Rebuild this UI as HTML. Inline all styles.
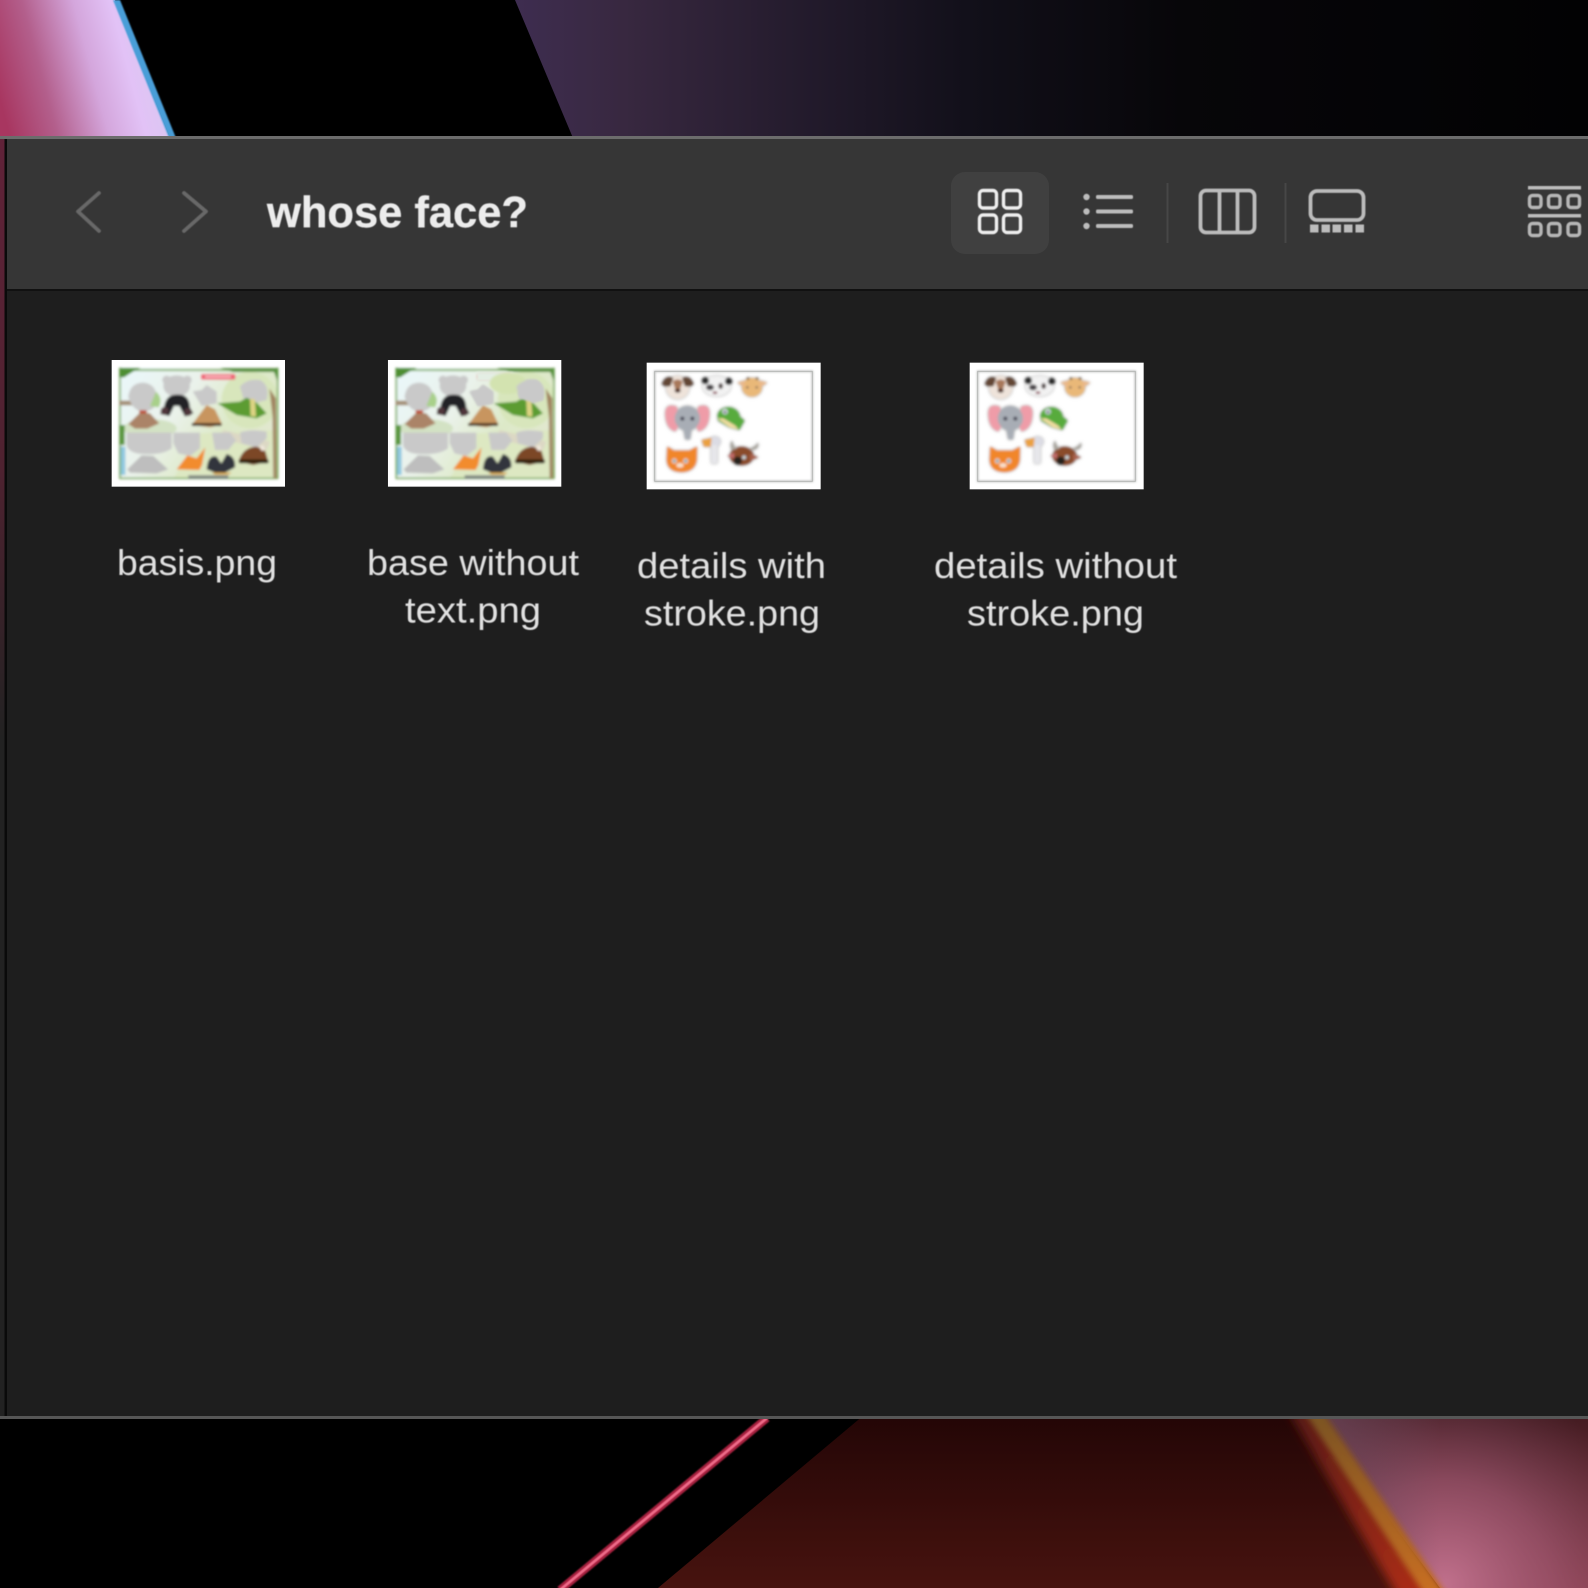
<!DOCTYPE html>
<html lang="en">
<head>
<meta charset="utf-8">
<title>whose face?</title>
<style>
html,body{margin:0;padding:0;width:1588px;height:1588px;overflow:hidden;background:#000}
svg{display:block}
text{font-family:"Liberation Sans",sans-serif}
</style>
</head>
<body>
<svg xmlns="http://www.w3.org/2000/svg" width="1588" height="1588" viewBox="0 0 1588 1588">
<defs>
  <linearGradient id="pink" gradientUnits="userSpaceOnUse" x1="0" y1="100" x2="150" y2="60">
    <stop offset="0" stop-color="#a83660"/>
    <stop offset="0.3" stop-color="#b35f8c"/>
    <stop offset="0.62" stop-color="#d4a6dc"/>
    <stop offset="0.85" stop-color="#e2c2f6"/>
    <stop offset="1" stop-color="#dcc6f2"/>
  </linearGradient>
  <linearGradient id="purple" gradientUnits="userSpaceOnUse" x1="515" y1="0" x2="1588" y2="0">
    <stop offset="0" stop-color="#3e2d50"/>
    <stop offset="0.1" stop-color="#382840"/>
    <stop offset="0.28" stop-color="#221a2b"/>
    <stop offset="0.42" stop-color="#12101a"/>
    <stop offset="0.62" stop-color="#070609"/>
    <stop offset="1" stop-color="#020203"/>
  </linearGradient>
  <linearGradient id="red" gradientUnits="userSpaceOnUse" x1="0" y1="1419" x2="0" y2="1588">
    <stop offset="0" stop-color="#240606"/>
    <stop offset="1" stop-color="#47130f"/>
  </linearGradient>
  <linearGradient id="orange" gradientUnits="userSpaceOnUse" x1="0" y1="1419" x2="0" y2="1588">
    <stop offset="0" stop-color="#7d5420"/>
    <stop offset="1" stop-color="#c66e22"/>
  </linearGradient>
  <linearGradient id="redband" gradientUnits="userSpaceOnUse" x1="0" y1="1419" x2="0" y2="1588">
    <stop offset="0" stop-color="#5e1c12"/>
    <stop offset="1" stop-color="#a82c12"/>
  </linearGradient>
  <linearGradient id="roseBase" gradientUnits="userSpaceOnUse" x1="1588" y1="1419" x2="1588" y2="1588">
    <stop offset="0" stop-color="#451c22"/>
    <stop offset="1" stop-color="#8c3c4a"/>
  </linearGradient>
  <radialGradient id="roseGlow" gradientUnits="userSpaceOnUse" cx="1445" cy="1585" r="210">
    <stop offset="0" stop-color="#c0708c" stop-opacity="1"/>
    <stop offset="0.5" stop-color="#a05a74" stop-opacity="0.65"/>
    <stop offset="1" stop-color="#7a4a60" stop-opacity="0"/>
  </radialGradient>
  <linearGradient id="roseEdge" gradientUnits="userSpaceOnUse" x1="1330" y1="1430" x2="1440" y2="1430">
    <stop offset="0" stop-color="#745066" stop-opacity="0.9"/>
    <stop offset="1" stop-color="#745066" stop-opacity="0"/>
  </linearGradient>
  <linearGradient id="strip" x1="0" y1="0" x2="0" y2="1">
    <stop offset="0" stop-color="#602238"/>
    <stop offset="0.55" stop-color="#4e2230"/>
    <stop offset="1" stop-color="#222"/>
  </linearGradient>
  <linearGradient id="scene" x1="0" y1="0" x2="1" y2="0.5">
    <stop offset="0" stop-color="#eaf7fb"/>
    <stop offset="0.45" stop-color="#eaf2ea"/>
    <stop offset="0.75" stop-color="#dde9c8"/>
    <stop offset="1" stop-color="#e2e8d0"/>
  </linearGradient>
  <filter id="soft" x="-5%" y="-5%" width="110%" height="110%"><feGaussianBlur stdDeviation="3.6"/></filter>
  <filter id="softl" x="-20%" y="-20%" width="140%" height="140%"><feGaussianBlur stdDeviation="0.7"/></filter>
  <filter id="soft3" x="-30%" y="-10%" width="160%" height="120%"><feGaussianBlur stdDeviation="3"/></filter>
  <filter id="soft5" x="-30%" y="-10%" width="160%" height="120%"><feGaussianBlur stdDeviation="5"/></filter>
  <filter id="txt" x="-5%" y="-20%" width="110%" height="140%"><feGaussianBlur stdDeviation="0.45"/></filter>
  <filter id="halo" x="-10%" y="-10%" width="120%" height="120%">
    <feGaussianBlur in="SourceAlpha" stdDeviation="4" result="b"/>
    <feFlood flood-color="#b8b8b8" flood-opacity="0.95"/>
    <feComposite in2="b" operator="in" result="s"/>
    <feMerge><feMergeNode in="s"/><feMergeNode in="s"/><feMergeNode in="SourceGraphic"/></feMerge>
  </filter>

  <g id="sceneThumb">
    <rect x="35" y="30" width="520" height="380" fill="#fff"/>
    <g filter="url(#soft)">
      <rect x="58" y="53" width="475" height="334" fill="url(#scene)"/>
      <ellipse cx="450" cy="150" rx="85" ry="85" fill="#d8e6bc"/>
      <ellipse cx="150" cy="235" rx="80" ry="28" fill="#d3e2c4"/>
      <path d="M220 387 L300 250 L530 240 L533 387Z" fill="#dde8c2"/>
      <path d="M370 240 L510 275 L500 300 L360 265Z" fill="#dcd8c4"/>
      <path d="M58 290 H76 V375 H58Z" fill="#90c8e0"/>
      <path d="M58 60 H533 M533 53 V387 M533 385 H58 M60 387 V53" fill="none" stroke="#74a858" stroke-width="5"/>
      <path d="M58 54 H122 L100 64 L72 82 H58Z" fill="#4e8e30"/>
      <path d="M360 54 H533 V96 L522 66 H400Z" fill="#55913a"/>
      <path d="M58 225 H74 V285 H58Z" fill="#5a9640"/>
      <path d="M58 152 H105 V166 H58Z" fill="#a59078"/>
      <path d="M508 115 L528 145 L530 385 L520 385 L518 200Z" fill="#a08460"/>
      <rect x="265" y="376" width="120" height="10" fill="#7e8480"/>
      <rect x="303" y="72" width="103" height="17" rx="5" fill="#ee6274"/>
      <rect x="315" y="78" width="78" height="4" fill="#ffd6da"/>
      <g fill="#c9c9c9">
        <path d="M85 140 Q90 100 128 98 Q170 100 172 150 Q170 180 130 186 Q95 180 85 140Z"/>
        <circle cx="200" cy="90" r="13"/><circle cx="262" cy="90" r="13"/>
        <ellipse cx="230" cy="108" rx="40" ry="32"/>
        <path d="M278 124 L305 120 L320 105 L350 125 L350 160 L305 168Z"/>
        <path d="M420 110 Q440 85 480 90 Q510 105 500 150 L470 158 L430 145Z"/>
        <path d="M80 248 H215 V295 Q190 315 130 312 Q85 310 80 285Z"/>
        <path d="M220 248 H300 V295 L270 318 L235 310 L220 280Z"/>
        <path d="M336 248 H390 L408 272 L385 300 L345 300Z"/>
        <path d="M420 248 Q450 236 500 245 V265 L470 292 L425 280Z"/>
        <path d="M82 358 L125 316 L160 318 L204 358 L170 370 L90 368Z" fill="#bebebe"/>
      </g>
      <path d="M168 125 Q190 145 176 172 L150 168Z" fill="#a8d08a"/>
      <path d="M85 222 L122 186 L150 190 L178 220 L142 236 L105 236Z" fill="#ab8468"/>
      <rect x="118" y="181" width="22" height="9" fill="#c04830"/>
      <path d="M192 172 Q198 132 232 134 Q268 132 270 172 L280 190 L255 200 L238 168 L222 168 L208 198 L180 192Z" fill="#232125"/>
      <circle cx="194" cy="183" r="12" fill="#50343a"/><circle cx="264" cy="186" r="12" fill="#50343a"/>
      <path d="M275 225 L320 165 L345 178 L367 224 L330 232Z" fill="#c8955e"/>
      <rect x="275" y="219" width="90" height="9" rx="4" fill="#463220"/>
      <path d="M352 160 L420 155 L440 143 L470 158 L500 190 L470 205 L410 195Z" fill="#5c9c30"/>
      <path d="M450 146 L465 148 L468 200 L452 198Z" fill="#ded484"/>
      <path d="M230 358 L262 316 L290 325 L316 292 L306 345 L298 360Z" fill="#f28c2e"/>
      <path d="M320 358 Q324 312 350 320 L364 340 L380 312 Q408 320 405 352 L375 368 H345Z" fill="#33363c"/>
      <path d="M335 368 H395 L385 374 H345Z" fill="#d8a040"/>
      <path d="M415 335 Q430 290 470 290 L495 300 L505 335 L460 345Z" fill="#7c4726"/>
      <rect x="416" y="328" width="90" height="12" rx="6" fill="#33200f"/>
      <path d="M478 290 L490 285 L496 302 L484 302Z" fill="#f0e8dc"/>
    </g>
  </g>

  <g id="facesThumb">
    <rect x="50" y="38" width="522" height="380" fill="#fff"/>
    <rect x="74" y="64" width="473" height="330" fill="none" stroke="#aaacaa" stroke-width="4" filter="url(#soft3)"/>
    <rect x="74" y="64" width="473" height="330" fill="none" stroke="#b2b4b2" stroke-width="2.500"/>
    <g filter="url(#soft)">
     <g filter="url(#halo)">
      <ellipse cx="143" cy="112" rx="35" ry="35" fill="#eee3da"/>
      <path d="M95 102 Q106 72 130 84 L122 108 Q105 114 95 102Z" fill="#644636"/>
      <path d="M191 102 Q180 72 156 84 L164 108 Q181 114 191 102Z" fill="#644636"/>
      <path d="M128 95 Q143 82 158 95 L150 118 H136Z" fill="#a8785a"/>
      <ellipse cx="143" cy="122" rx="9" ry="6" fill="#4a2a20"/>
      <ellipse cx="260" cy="108" rx="42" ry="30" fill="#f2f2f2"/>
      <circle cx="226" cy="92" r="11" fill="#2a2a2c"/><circle cx="296" cy="94" r="11" fill="#2a2a2c"/>
      <ellipse cx="240" cy="112" rx="12" ry="9" fill="#4a4548"/><ellipse cx="272" cy="108" rx="7" ry="9" fill="#55484a"/>
      <ellipse cx="255" cy="128" rx="7" ry="4" fill="#884050"/>
      <ellipse cx="366" cy="112" rx="30" ry="28" fill="#e9b878"/>
      <path d="M322 98 L345 92 L345 112Z" fill="#eab888"/><path d="M412 98 L388 92 L388 114Z" fill="#eab888"/>
      <circle cx="354" cy="86" r="4" fill="#7a5c30"/><circle cx="381" cy="86" r="4" fill="#7a5c30"/>
      <circle cx="352" cy="112" r="3" fill="#334"/><circle cx="380" cy="112" r="3" fill="#334"/>
      <path d="M140 170 Q104 158 106 195 Q108 236 136 244 L150 220Z" fill="#ef9ca8"/>
      <path d="M205 170 Q241 158 238 195 Q236 236 206 244 L194 220Z" fill="#ef9ca8"/>
      <ellipse cx="172" cy="205" rx="38" ry="37" fill="#a8adb5"/>
      <path d="M158 225 H186 L180 268 H166Z" fill="#a8adb5"/>
      <circle cx="157" cy="206" r="6" fill="#445"/><circle cx="187" cy="206" r="6" fill="#445"/>
      <path d="M262 195 Q270 168 305 172 Q328 180 330 200 L344 212 L328 240 L298 232 L264 212Z" fill="#58ab3e"/>
      <path d="M262 205 L300 232 L326 238 L315 226 L280 205Z" fill="#f0dca0"/>
      <circle cx="285" cy="185" r="8" fill="#eef"/><circle cx="285" cy="186" r="4" fill="#334"/>
      <path d="M112 290 L132 302 H178 L201 290 L200 330 Q195 366 152 366 Q112 364 110 330Z" fill="#f1862c"/>
      <circle cx="133" cy="333" r="7" fill="#dfeef2"/><circle cx="167" cy="333" r="7" fill="#dfeef2"/>
      <circle cx="133" cy="333" r="3.500" fill="#2a3a4a"/><circle cx="167" cy="333" r="3.500" fill="#2a3a4a"/>
      <ellipse cx="150" cy="346" rx="11" ry="7" fill="#f8e0cc"/>
      <ellipse cx="254" cy="275" rx="17" ry="15" fill="#dcdce4"/>
      <path d="M244 285 H262 L262 340 H244Z" fill="#e6e6ea"/>
      <path d="M215 270 L245 264 L242 290 L222 290Z" fill="#eaa040"/>
      <ellipse cx="335" cy="318" rx="36" ry="28" fill="#8a4c2c"/>
      <path d="M305 300 Q298 285 306 272 Q310 292 322 296Z" fill="#a8a49c"/>
      <path d="M368 300 Q388 296 384 278 Q376 292 358 296Z" fill="#a8a49c"/>
      <path d="M292 318 L312 308 V326Z" fill="#c26a6a"/><path d="M385 322 L360 310 V332Z" fill="#a8604c"/>
      <ellipse cx="323" cy="332" rx="13" ry="13" fill="#28201c"/>
      <circle cx="342" cy="322" r="6" fill="#c8d4d8"/>
     </g>
    </g>
  </g>
</defs>

<!-- wallpaper -->
<rect width="1588" height="1588" fill="#000"/>
<polygon points="0,0 115,0 170,138 0,138" fill="url(#pink)"/>
<polygon points="113,0 120,0 176,138 169,138" fill="#4a9ed8" filter="url(#softl)"/>
<polygon points="515,0 1588,0 1588,138 573,138" fill="url(#purple)"/>

<polygon points="864,1415 1320,1415 1445,1588 658,1588" fill="url(#red)"/>
<polygon points="1312,1415 1588,1415 1588,1588 1440,1588" fill="url(#roseBase)"/>
<polygon points="1312,1415 1588,1415 1588,1588 1440,1588" fill="url(#roseGlow)"/>
<polygon points="1312,1415 1440,1415 1560,1588 1440,1588" fill="url(#roseEdge)" opacity="0.7"/>
<polygon points="1288,1410 1314,1410 1438,1600 1400,1600" fill="url(#redband)" filter="url(#soft5)"/>
<polygon points="1303,1410 1322,1410 1450,1600 1428,1600" fill="url(#orange)" filter="url(#soft3)"/>
<line x1="767" y1="1418" x2="560" y2="1590" stroke="#a82340" stroke-width="8" filter="url(#softl)"/>
<line x1="767" y1="1418" x2="560" y2="1590" stroke="#ee6a88" stroke-width="2.800" filter="url(#txt)"/>

<!-- window -->
<rect x="0" y="136" width="1588" height="1283" fill="#1e1e1e"/>
<rect x="0" y="139" width="5" height="600" fill="url(#strip)"/>
<rect x="0" y="739" width="5" height="678" fill="#222"/>
<rect x="4.500" y="139" width="2.500" height="1277" fill="#0a0a0a"/>
<rect x="7" y="139" width="1581" height="150" fill="#363636"/>
<rect x="7" y="289" width="1581" height="2" fill="#111"/>
<rect x="0" y="136" width="1588" height="3" fill="#6c6c6c"/>
<rect x="0" y="1416" width="1588" height="3" fill="#565656"/>

<!-- nav -->
<g fill="none" stroke="#676767" stroke-width="3.800" stroke-linecap="round" stroke-linejoin="round" filter="url(#txt)">
  <path d="M99 193 L78 211.500 L99 231"/>
  <path d="M184 193 L206 211.500 L184 231"/>
</g>
<text x="267" y="227" font-size="43.500" font-weight="700" fill="#ececec" stroke="#ececec" stroke-width="0.400" textLength="261" lengthAdjust="spacingAndGlyphs" filter="url(#txt)">whose face?</text>

<!-- toolbar icons -->
<rect x="951" y="172" width="98" height="82" rx="14" fill="#404040"/>
<g filter="url(#txt)">
<g fill="none" stroke="#eeeeee" stroke-width="3.400">
  <rect x="979.500" y="190.500" width="17" height="17.500" rx="3.500"/>
  <rect x="1003.500" y="190.500" width="17" height="17.500" rx="3.500"/>
  <rect x="979.500" y="215" width="17" height="17.500" rx="3.500"/>
  <rect x="1003.500" y="215" width="17" height="17.500" rx="3.500"/>
</g>
<g fill="#bcbcbc">
  <circle cx="1086.500" cy="197" r="3.200"/><circle cx="1086.500" cy="211.500" r="3.200"/><circle cx="1086.500" cy="226" r="3.200"/>
  <rect x="1096" y="195" width="37" height="4" rx="1.500"/>
  <rect x="1096" y="209.500" width="37" height="4" rx="1.500"/>
  <rect x="1096" y="224" width="37" height="4" rx="1.500"/>
</g>
<g fill="none" stroke="#bcbcbc" stroke-width="3.800">
  <rect x="1200.500" y="190.500" width="54" height="42" rx="5.500"/>
  <path d="M1219.500 190.500 V232.500 M1237.500 190.500 V232.500"/>
  <rect x="1310.500" y="191" width="53" height="29" rx="6.500"/>
</g>
<g fill="#bcbcbc">
  <rect x="1310" y="224.500" width="8.500" height="8"/>
  <rect x="1321.500" y="224.500" width="8.500" height="8"/>
  <rect x="1332.500" y="224.500" width="8.500" height="8"/>
  <rect x="1344" y="224.500" width="8.500" height="8"/>
  <rect x="1355.500" y="224.500" width="8.500" height="8"/>
  <rect x="1528" y="186" width="53" height="3.500"/>
  <rect x="1528" y="214" width="53" height="3.500"/>
</g>
<g fill="none" stroke="#b6b6b6" stroke-width="3.400">
  <rect x="1529.500" y="195.500" width="11.500" height="12" rx="3"/>
  <rect x="1548.500" y="195.500" width="11.500" height="12" rx="3"/>
  <rect x="1568" y="195.500" width="11.500" height="12" rx="3"/>
  <rect x="1529.500" y="223.500" width="11.500" height="12" rx="3"/>
  <rect x="1548.500" y="223.500" width="11.500" height="12" rx="3"/>
  <rect x="1568" y="223.500" width="11.500" height="12" rx="3"/>
</g>
</g>
<rect x="1166.500" y="183" width="2" height="60" fill="#474747"/>
<rect x="1284.500" y="183" width="2" height="60" fill="#474747"/>

<!-- thumbnails -->
<use href="#sceneThumb" transform="translate(100 350) scale(0.33333)"/>
<g transform="translate(376.300 350) scale(0.33333)">
  <use href="#sceneThumb"/>
  <g filter="url(#soft)">
    <rect x="300" y="66" width="110" height="28" fill="#e4eee4"/>
    <ellipse cx="395" cy="100" rx="55" ry="32" fill="#d3e3b0"/>
    <path d="M420 110 Q440 85 480 90 Q510 105 500 150 L470 158 L430 145Z" fill="#c9c9c9"/>
    <path d="M284 124 L305 120 L320 105 L350 125 L350 160 L305 168Z" fill="#c9c9c9"/>
  </g>
</g>
<use href="#facesThumb" transform="translate(630 350) scale(0.33333)"/>
<use href="#facesThumb" transform="translate(953 350) scale(0.33333)"/>

<!-- labels -->
<g font-size="36" fill="#e0e0e0" filter="url(#txt)">
  <text x="117" y="575" textLength="160" lengthAdjust="spacingAndGlyphs">basis.png</text>
  <text x="367" y="575" textLength="212" lengthAdjust="spacingAndGlyphs">base without</text>
  <text x="405" y="622.500" textLength="136" lengthAdjust="spacingAndGlyphs">text.png</text>
  <text x="637" y="578" textLength="189" lengthAdjust="spacingAndGlyphs">details with</text>
  <text x="644" y="625.500" textLength="176" lengthAdjust="spacingAndGlyphs">stroke.png</text>
  <text x="934" y="578" textLength="243" lengthAdjust="spacingAndGlyphs">details without</text>
  <text x="967" y="625.500" textLength="177" lengthAdjust="spacingAndGlyphs">stroke.png</text>
</g>
</svg>
</body>
</html>
